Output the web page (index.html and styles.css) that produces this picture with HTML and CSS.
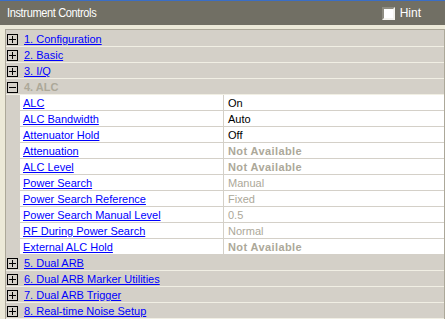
FILE: index.html
```html
<!DOCTYPE html>
<html>
<head>
<meta charset="utf-8">
<link rel="stylesheet" href="styles.css">
</head>
<body>
<div class="topline"></div>
<div class="titlebar">
  <span class="title">Instrument Controls</span>
  <label class="hint"><span class="check"></span><span>Hint</span></label>
</div>
<div class="strip"></div>
<div class="panel">
  <div class="sec"><svg class="box" width="11" height="11" viewBox="0 0 11 11"><rect x="0.5" y="0.5" width="10" height="10" fill="none" stroke="#000"/><path d="M2 5.5h7M5.5 2v7" stroke="#000"/></svg><a class="link">1. Configuration</a></div>
  <div class="sec"><svg class="box" width="11" height="11" viewBox="0 0 11 11"><rect x="0.5" y="0.5" width="10" height="10" fill="none" stroke="#000"/><path d="M2 5.5h7M5.5 2v7" stroke="#000"/></svg><a class="link">2. Basic</a></div>
  <div class="sec"><svg class="box" width="11" height="11" viewBox="0 0 11 11"><rect x="0.5" y="0.5" width="10" height="10" fill="none" stroke="#000"/><path d="M2 5.5h7M5.5 2v7" stroke="#000"/></svg><a class="link">3. I/Q</a></div>
  <div class="sec"><svg class="box" width="11" height="11" viewBox="0 0 11 11"><rect x="0.5" y="0.5" width="10" height="10" fill="none" stroke="#000"/><path d="M2 5.5h7" stroke="#000"/></svg><span class="open">4. ALC</span></div>
  <div class="table">
    <div class="row"><a class="name">ALC</a><span class="val">On</span></div>
    <div class="row"><a class="name">ALC Bandwidth</a><span class="val">Auto</span></div>
    <div class="row"><a class="name">Attenuator Hold</a><span class="val">Off</span></div>
    <div class="row"><a class="name">Attenuation</a><span class="val na">Not Available</span></div>
    <div class="row"><a class="name">ALC Level</a><span class="val na">Not Available</span></div>
    <div class="row"><a class="name">Power Search</a><span class="val dim">Manual</span></div>
    <div class="row"><a class="name">Power Search Reference</a><span class="val dim">Fixed</span></div>
    <div class="row"><a class="name">Power Search Manual Level</a><span class="val dim">0.5</span></div>
    <div class="row"><a class="name">RF During Power Search</a><span class="val dim">Normal</span></div>
    <div class="row"><a class="name">External ALC Hold</a><span class="val na">Not Available</span></div>
  </div>
  <div class="sec"><svg class="box" width="11" height="11" viewBox="0 0 11 11"><rect x="0.5" y="0.5" width="10" height="10" fill="none" stroke="#000"/><path d="M2 5.5h7M5.5 2v7" stroke="#000"/></svg><a class="link">5. Dual ARB</a></div>
  <div class="sec"><svg class="box" width="11" height="11" viewBox="0 0 11 11"><rect x="0.5" y="0.5" width="10" height="10" fill="none" stroke="#000"/><path d="M2 5.5h7M5.5 2v7" stroke="#000"/></svg><a class="link">6. Dual ARB Marker Utilities</a></div>
  <div class="sec"><svg class="box" width="11" height="11" viewBox="0 0 11 11"><rect x="0.5" y="0.5" width="10" height="10" fill="none" stroke="#000"/><path d="M2 5.5h7M5.5 2v7" stroke="#000"/></svg><a class="link">7. Dual ARB Trigger</a></div>
  <div class="sec"><svg class="box" width="11" height="11" viewBox="0 0 11 11"><rect x="0.5" y="0.5" width="10" height="10" fill="none" stroke="#000"/><path d="M2 5.5h7M5.5 2v7" stroke="#000"/></svg><a class="link">8. Real-time Noise Setup</a></div>
</div>
</body>
</html>
```
FILE: styles.css
```css
html, body {
  margin: 0;
  padding: 0;
  background: #ece9d8;
  font-family: "Liberation Sans", Arial, sans-serif;
  font-size: 11px;
  overflow: hidden;
  width: 445px;
  height: 319px;
}
.topline {
  height: 1px;
  background: #3a6ec6;
}
.titlebar {
  height: 24px;
  background: #716f64;
  display: flex;
  align-items: center;
  justify-content: space-between;
  padding: 0 0 0 7px;
  color: #fff;
}
.title {
  font-size: 12px;
  letter-spacing: -0.4px;
  transform: scaleX(0.92);
  transform-origin: left center;
}
.hint {
  display: flex;
  align-items: center;
  font-size: 12px;
  margin-right: 24px;
}
.check {
  width: 9px;
  height: 9px;
  background: #fff;
  border: 2px solid;
  border-color: #8e8c81 #f4f3ee #f4f3ee #8e8c81;
  margin-right: 5px;
}
.strip {
  height: 4px;
  background: #ece9d8;
}
.panel {
  margin-left: 5px;
  border: 1px solid #aca899;
  border-bottom: none;
  background: #d4d0c8;
  padding-top: 1px;
  height: 300px;
}
.sec {
  height: 15px;
  border-bottom: 1px solid #f1efe4;
  display: flex;
  align-items: center;
  padding-left: 1px;
}
.box {
  display: block;
  margin-right: 6px;
  margin-top: 1px;
}
.link, .name {
  color: #0000ff;
  text-decoration: underline;
  line-height: 15px;
  padding-top: 2px;
}
.open {
  color: #aca899;
  font-weight: bold;
  line-height: 15px;
  padding-top: 2px;
}
.table {
  margin-left: 14px;
  background: #fff;
}
.row {
  display: grid;
  grid-template-columns: 203px 1fr;
  height: 15px;
  border-bottom: 1px solid #d4d0c8;
}
.name {
  padding-left: 3px;
  padding-top: 1px;
  line-height: 14px;
}
.val {
  border-left: 1px solid #d4d0c8;
  padding-left: 4px;
  color: #000;
  line-height: 14px;
  padding-top: 1px;
}
.val.dim {
  color: #aca899;
}
.val.na {
  color: #aca899;
  font-weight: bold;
  letter-spacing: 0.4px;
}
```
